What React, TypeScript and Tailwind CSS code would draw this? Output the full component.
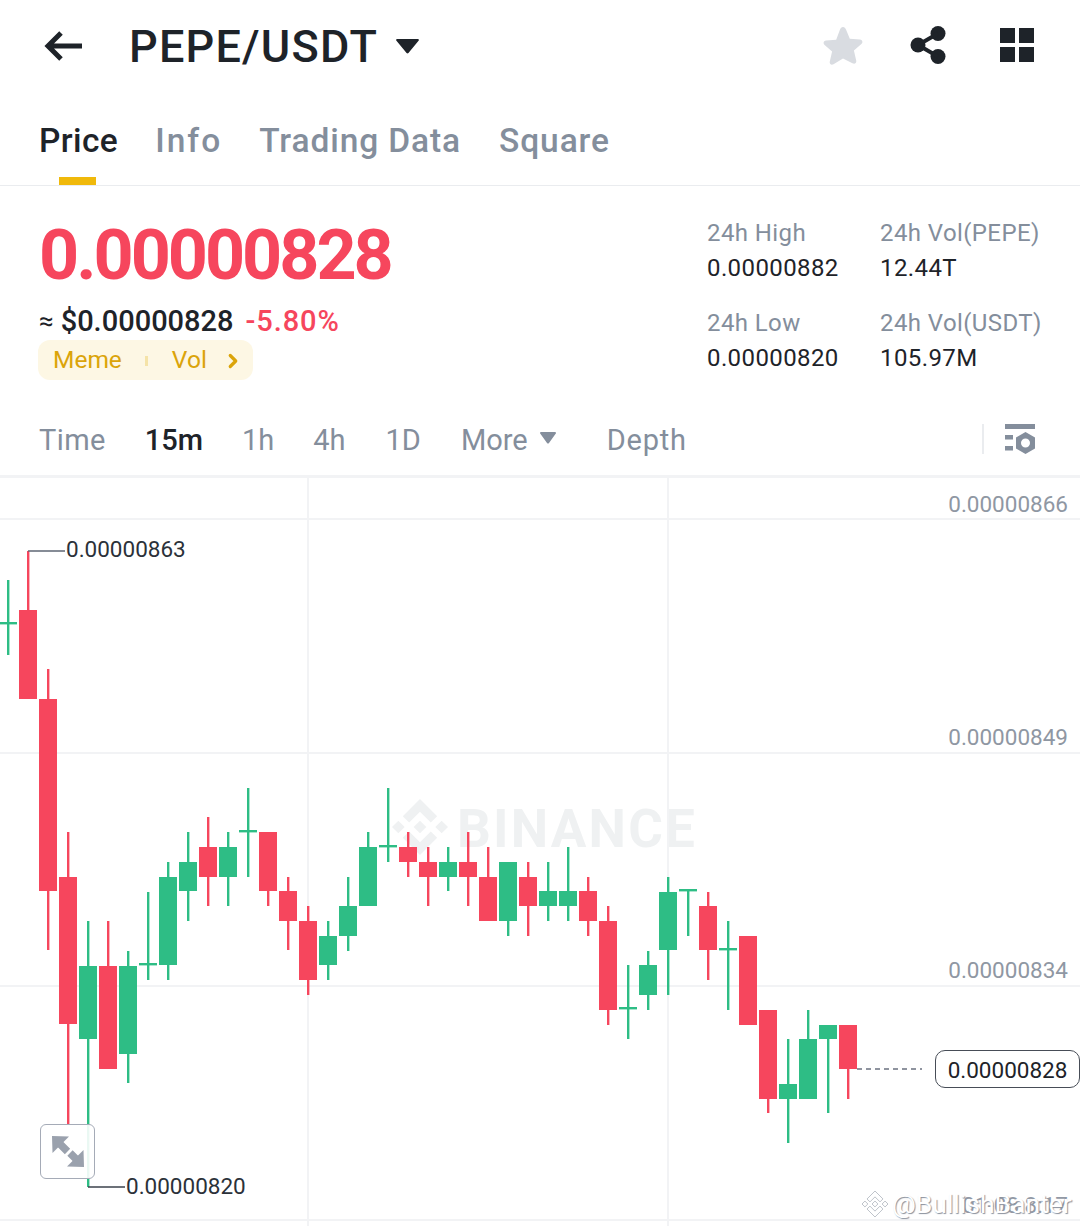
import { ChevronRight } from "lucide-react";

type Candle = [x: number, top: number, open: number, close: number, low: number, up: boolean];

const RED = "#F6465D";
const GREEN = "#2EBD85";

// wick top, body top, body bottom, wick bottom
const candles: Candle[] = [
  [8, 580, 623, 623, 655, true],
  [28, 551, 610, 699, 699, false],
  [48, 669, 699, 891, 950, false],
  [68, 832, 877, 1024, 1124, false],
  [88, 921, 966, 1039, 1187, true],
  [108, 921, 966, 1069, 1069, false],
  [128, 951, 966, 1054, 1083, true],
  [148, 892, 964, 964, 980, true],
  [168, 862, 877, 965, 980, true],
  [188, 832, 862, 891, 921, true],
  [208, 817, 847, 877, 906, false],
  [228, 832, 847, 877, 906, true],
  [248, 788, 831, 831, 877, true],
  [268, 832, 832, 891, 906, false],
  [288, 877, 891, 921, 950, false],
  [308, 906, 921, 980, 995, false],
  [328, 921, 936, 965, 980, true],
  [348, 877, 906, 936, 951, true],
  [368, 832, 847, 906, 906, true],
  [388, 788, 846, 846, 862, true],
  [408, 832, 847, 862, 877, false],
  [428, 847, 862, 877, 906, false],
  [448, 847, 862, 877, 891, true],
  [468, 832, 862, 877, 906, false],
  [488, 847, 877, 921, 921, false],
  [508, 862, 862, 921, 936, true],
  [528, 862, 877, 906, 936, false],
  [548, 862, 891, 906, 921, true],
  [568, 847, 891, 906, 921, true],
  [588, 877, 891, 921, 936, false],
  [608, 906, 921, 1010, 1025, false],
  [628, 965, 1008, 1008, 1039, true],
  [648, 951, 965, 995, 1010, true],
  [668, 877, 892, 950, 995, true],
  [688, 890, 890, 890, 936, true],
  [708, 892, 906, 950, 980, false],
  [728, 921, 949, 949, 1010, true],
  [748, 936, 936, 1025, 1025, false],
  [768, 1010, 1010, 1099, 1113, false],
  [788, 1039, 1084, 1099, 1143, true],
  [808, 1010, 1039, 1099, 1099, true],
  [828, 1025, 1025, 1039, 1113, true],
  [848, 1025, 1025, 1069, 1099, false],
];

const BINANCE_PATH =
  "M16.624 13.9202l2.7175 2.7154-7.353 7.353-7.353-7.352 2.7175-2.7164 4.6355 4.6595 4.6356-4.6595zm4.6366-4.6366L24 12l-2.7154 2.7164L18.5682 12l2.6924-2.7164zm-9.272.001l2.7163 2.6914-2.7164 2.7174v-.001L9.2721 12l2.7164-2.7154zm-9.2722-.001L5.4088 12l-2.6914 2.6924L0 12l2.7164-2.7164zM11.9885.0115l7.353 7.329-2.7174 2.7154-4.6356-4.6356-4.6355 4.6595-2.7174-2.7154 7.353-7.353z";

function Chart() {
  return (
    <svg viewBox="0 478 1080 748" className="absolute inset-0 h-full w-full">
      {[519, 753, 986, 1220].map((y) => (
        <rect key={y} x={0} y={y - 1} width={1080} height={2} fill="#F2F3F5" />
      ))}
      {[308, 668].map((x) => (
        <rect key={x} x={x - 1} y={478} width={2} height={748} fill="#F2F3F5" />
      ))}
      {candles.map(([x, top, open, close, low, up]) => {
        const color = up ? GREEN : RED;
        return (
          <g key={x} fill={color}>
            <rect x={x - 1} y={top} width={2.4} height={low - top} />
            <rect
              x={x - 9}
              y={open - (open === close ? 1 : 0)}
              width={18}
              height={Math.max(close - open, 2.4)}
            />
          </g>
        );
      })}
      <path d="M28 551H65" stroke="#5E6673" strokeWidth={1.5} fill="none" />
      <path d="M88 1187H125" stroke="#3B424D" strokeWidth={1.5} fill="none" />
      <path d="M857 1069H922" stroke="#6B7280" strokeWidth={1.5} strokeDasharray="5 4" fill="none" />
    </svg>
  );
}

export default function App() {
  return (
    <div className="flex h-[1226px] w-[1080px] flex-col overflow-hidden bg-white text-[#1E2329] [font-family:Roboto,sans-serif]">
      {/* top bar */}
      <div className="flex h-[92px] shrink-0 items-center pl-[44px] pr-[46px]">
        <svg viewBox="0 0 38 32" className="h-[32px] w-[38px]" fill="none" stroke="#1E2329" strokeWidth={5}>
          <path d="M38 16H4M17 3L4 16l13 13" />
        </svg>
        <span className="ml-[47px] pt-[1px] text-[45px] font-medium leading-none tracking-[1.2px]">PEPE/USDT</span>
        <svg viewBox="0 0 24 16" className="ml-[18px] h-[15px] w-[23px]" fill="#1E2329">
          <path d="M1 0h22a1 1 0 0 1 1 1.5L13 15a1.4 1.4 0 0 1-2 0L0 1.500A1 1 0 0 1 1 0z" />
        </svg>
        <svg viewBox="0 0 40 40" className="ml-auto h-[40px] w-[40px]" fill="#D9DCE1">
          <path d="M20 1c1.500 0 2.300 1 3 2.500l3.800 9.300 10 .8c2.600.2 3.500 2.600 1.600 4.400l-7.500 6.600 2.300 9.800c.6 2.600-1.500 4.100-3.700 2.800L20 32.600l-9.500 5.600c-2.200 1.300-4.300-.2-3.700-2.800l2.300-9.800L1.600 19c-1.900-1.800-1-4.200 1.600-4.400l10-.8L17 3.500C17.700 2 18.500 1 20 1z" />
        </svg>
        <svg viewBox="0 0 36 38" className="ml-[47px] h-[38px] w-[36px] -translate-y-[1px]" fill="#1E2329" stroke="#1E2329">
          <circle cx="8" cy="19" r="7.500" stroke="none" />
          <circle cx="28" cy="7.500" r="7.500" stroke="none" />
          <circle cx="28" cy="30.500" r="7.500" stroke="none" />
          <path d="M8 19L28 7.500M8 19l20 11.500" strokeWidth={4} fill="none" />
        </svg>
        <div className="ml-[54px] grid h-[34px] w-[34px] -translate-y-[1px] grid-cols-2 gap-[4px]">
          <span className="bg-[#1E2329]" />
          <span className="bg-[#1E2329]" />
          <span className="bg-[#1E2329]" />
          <span className="bg-[#1E2329]" />
        </div>
      </div>

      {/* tabs */}
      <div className="relative flex h-[94px] shrink-0 gap-[38px] border-b border-[#EAECEF] pl-[39px] pt-[27px] text-[33.500px] font-medium leading-[44px] tracking-[0.9px] text-[#848E9C]">
        <span className="-mr-[1px] tracking-[0.4px] text-[#1E2329]">Price</span>
        <span className="-mr-[1px] tracking-[2px]">Info</span>
        <span>Trading Data</span>
        <span>Square</span>
        <span className="absolute bottom-0 left-[59px] h-[8px] w-[37px] bg-[#F0B90B]" />
      </div>

      {/* price + stats */}
      <div className="flex h-[217px] shrink-0 pl-[39px]">
        <div className="w-[668px] pt-[29px]">
          <div className="text-[70px] font-bold leading-[80px] tracking-[-3px] text-[#F6465D]">0.00000828</div>
          <div className="mt-[11px] flex h-[30px] items-center text-[29px] leading-none">
            <span className="text-[26px]">≈</span>
            <span className="ml-[7px] font-medium">$0.00000828</span>
            <span className="ml-[12px] font-medium tracking-[0.9px] text-[#F6465D]">-5.80%</span>
          </div>
          <div className="-ml-[1px] mt-[4px] flex h-[40px] w-[215px] items-center rounded-[12px] bg-[#FDF7E4] pl-[15px] pt-[1px] text-[24.500px] leading-none text-[#DBA40A]">
            <span>Meme</span>
            <span className="ml-[23px] h-[10px] w-[3px] bg-[#F5E3A8]" />
            <span className="ml-[24px]">Vol</span>
            <ChevronRight className="ml-[15px] h-[22px] w-[22px]" strokeWidth={3.5} />
          </div>
        </div>
        <div className="grid h-fit grid-cols-[173px_1fr] gap-y-[20px] pt-[30px] text-[24px] leading-[35px] tracking-[0.4px]">
          <Stat label="24h High" value="0.00000882" />
          <Stat label="24h Vol(PEPE)" value="12.44T" />
          <Stat label="24h Low" value="0.00000820" />
          <Stat label="24h Vol(USDT)" value="105.97M" />
        </div>
      </div>

      {/* intervals */}
      <div className="flex h-[75px] shrink-0 items-center gap-[39px] border-b-[3px] border-[#F2F3F5] pl-[39px] pr-[45px] pt-[2px] text-[29px] leading-none text-[#848E9C]">
        <span className="tracking-[0.4px]">Time</span>
        <span className="font-medium text-[#1E2329]">15m</span>
        <span>1h</span>
        <span>4h</span>
        <span className="ml-[1px]">1D</span>
        <span className="ml-[1px] flex items-center gap-[12px]">
          More
          <svg viewBox="0 0 16 12" className="h-[12px] w-[16px] -translate-y-[2px]" fill="#848E9C">
            <path d="M0 1a1 1 0 0 1 1-1h14a1 1 0 0 1 .8 1.600L9 11a1.300 1.300 0 0 1-2 0L.2 1.600A1 1 0 0 1 0 1z" />
          </svg>
        </span>
        <span className="ml-[12px] tracking-[0.8px]">Depth</span>
        <span className="ml-auto flex -translate-y-[1px] items-center gap-[21px]">
          <span className="h-[30px] w-[2px] bg-[#EAECEF]" />
          <svg viewBox="0 0 30 30" className="h-[30px] w-[30px]" fill="#848E9C">
            <rect x="0" y="0" width="30" height="5" />
            <rect x="0" y="11" width="8" height="4.500" />
            <rect x="0" y="22" width="8" height="4.500" />
            <path fillRule="evenodd" d="M20.500 8l9.500 5.500v11L20.500 30 11 24.500v-11zM20.500 14.500a4.500 4.500 0 1 0 0 9 4.500 4.500 0 0 0 0-9z" />
          </svg>
        </span>
      </div>

      {/* chart */}
      <div className="relative flex-1 text-[22.500px] leading-none">
        <div className="absolute left-[392px] top-[319px] flex items-center gap-[9px] text-[#EFF1F2]">
          <svg viewBox="0 0 24 24" className="h-[56px] w-[56px]" fill="#EFF1F2">
            <path d={BINANCE_PATH} />
          </svg>
          <span className="mt-[6px] text-[53px] font-bold leading-none tracking-[2.2px]">BINANCE</span>
        </div>
        <Chart />
        <span className="absolute right-[12px] top-[15px] text-[#8F97A3]">0.00000866</span>
        <span className="absolute right-[12px] top-[248px] text-[#8F97A3]">0.00000849</span>
        <span className="absolute right-[12px] top-[481px] text-[#8F97A3]">0.00000834</span>
        <span className="absolute left-[66px] top-[60px] text-[#2B3139]">0.00000863</span>
        <span className="absolute left-[126px] top-[697px] text-[#2B3139]">0.00000820</span>
        <span className="absolute left-[935px] top-[572px] flex h-[38px] w-[145px] items-center justify-center rounded-[10px] border-[1.5px] border-[#474D57] bg-white pt-[3px] text-[#1E2329]">0.00000828</span>
        <button className="absolute left-[40px] top-[646px] flex h-[55px] w-[55px] items-center justify-center rounded-[6px] border-[1.5px] border-[#A5ABB7] bg-white/90">
          <svg viewBox="0 0 32 32" className="h-[32px] w-[32px]" fill="#9AA1AD">
            <path d="M0 0l17 .5L.5 17zM32 31l-17-.5L31.500 14z" />
            <path d="M8 8l7.500 7.500M24 23l-6-6" stroke="#9AA1AD" strokeWidth={7.5} fill="none" />
          </svg>
        </button>
        <span className="absolute right-[12px] top-[716px] text-[#9299A5]">01-08 8:17</span>
        <div className="absolute left-[862px] top-[713px] flex items-center gap-[4px] text-white [text-shadow:1px_1px_1px_#8A919D]">
          <svg viewBox="0 0 24 24" className="h-[26px] w-[26px]" fill="#FFFFFF" stroke="#B4B9C2" strokeWidth={0.8}>
            <path d={BINANCE_PATH} />
          </svg>
          <span className="text-[26.500px]">@BullishBanter</span>
        </div>
      </div>
    </div>
  );
}

function Stat({ label, value }: { label: string; value: string }) {
  return (
    <div>
      <div className="text-[#848E9C]">{label}</div>
      <div className="text-[#1E2329]">{value}</div>
    </div>
  );
}
